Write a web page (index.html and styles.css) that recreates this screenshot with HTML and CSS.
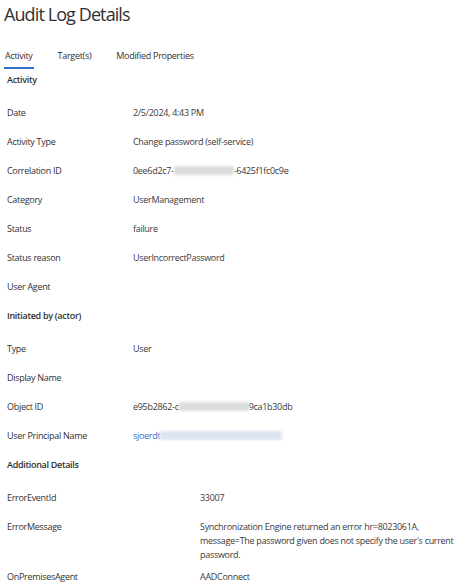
FILE: index.html
```html
<!DOCTYPE html>
<html lang="en">
<head>
<meta charset="utf-8">
<title>Audit Log Details</title>
<link rel="stylesheet" href="styles.css">
</head>
<body>
<div class="page">
  <h1 class="title">Audit Log Details</h1>
  <nav class="tabs">
    <span class="tab active">Activity</span>
    <span class="tab">Target(s)</span>
    <span class="tab">Modified Properties</span>
  </nav>

  <section class="section">
    <div class="section-head first">Activity</div>
    <div class="row"><div class="label">Date</div><div class="value">2/5/2024, 4:43 PM</div></div>
    <div class="row"><div class="label">Activity Type</div><div class="value">Change password (self-service)</div></div>
    <div class="row"><div class="label">Correlation ID</div><div class="value">0ee6d2c7-<span class="redact r-corr"></span>-6425f1fc0c9e</div></div>
    <div class="row"><div class="label">Category</div><div class="value">UserManagement</div></div>
    <div class="row"><div class="label">Status</div><div class="value">failure</div></div>
    <div class="row"><div class="label">Status reason</div><div class="value">UserIncorrectPassword</div></div>
    <div class="row"><div class="label">User Agent</div><div class="value"></div></div>
  </section>

  <section class="section">
    <div class="section-head">Initiated by (actor)</div>
    <div class="row"><div class="label">Type</div><div class="value">User</div></div>
    <div class="row"><div class="label">Display Name</div><div class="value"></div></div>
    <div class="row"><div class="label">Object ID</div><div class="value">e95b2862-c<span class="redact r-obj"></span>9ca1b30db</div></div>
    <div class="row"><div class="label">User Principal Name</div><div class="value link">sjoerdt<span class="redact r-upn"></span></div></div>
  </section>

  <section class="section wide">
    <div class="section-head">Additional Details</div>
    <div class="row"><div class="label">ErrorEventId</div><div class="value">33007</div></div>
    <div class="row top"><div class="label">ErrorMessage</div><div class="value">Synchronization Engine returned an error hr=8023061A, message=The password given does not specify the user's current password.</div></div>
    <div class="row"><div class="label">OnPremisesAgent</div><div class="value">AADConnect</div></div>
  </section>
</div>
</body>
</html>
```

FILE: styles.css
```css
* { box-sizing: border-box; }
html, body { margin: 0; padding: 0; background: #ffffff; }
body {
  font-family: "Open Sans", "Noto Sans", "Liberation Sans", sans-serif;
  font-size: 9px;
  letter-spacing: -0.3px;
  color: #323130;
}
.page { width: 474px; }
.title {
  margin: 0;
  padding: 2px 0 0 4px;
  font-size: 18px;
  font-weight: 400;
  letter-spacing: -0.9px;
  line-height: 24px;
  color: #323130;
}
.tabs {
  display: flex;
  gap: 23px;
  margin-top: 23px;
  padding-left: 4px;
}
.tab {
  line-height: 14px;
  padding: 0 1px 4px;
  border-bottom: 2px solid transparent;
  color: #323130;
}
.tab.active { border-bottom-color: #2f6fc4; }
.section-head {
  padding: 8px 0 8px 7px;
  line-height: 14px;
  font-weight: 600;
  margin-bottom: 3px;
}
.section-head.first { padding-top: 4px; }
.row {
  display: flex;
  align-items: center;
  min-height: 29px;
  padding: 3px 0;
}
.row.top { align-items: flex-start; padding: 8px 0 0; }
.label {
  width: 133px;
  flex: none;
  padding-left: 7px;
  line-height: 14px;
  color: #323130;
}
.wide .label { width: 200px; }
.value {
  flex: 1;
  line-height: 14px;
  color: #3b3a39;
  display: flex;
  align-items: center;
  flex-wrap: wrap;
}
.wide .value { display: block; flex: none; width: 262px; }
.link { color: #3a6fc8; }
.redact {
  display: inline-block;
  height: 9px;
  background: #dcdcdc;
  filter: blur(1.5px);
}
.r-corr { width: 60px; }
.r-obj { width: 70px; }
.r-upn { width: 122px; background: #dde4f2; }
```
